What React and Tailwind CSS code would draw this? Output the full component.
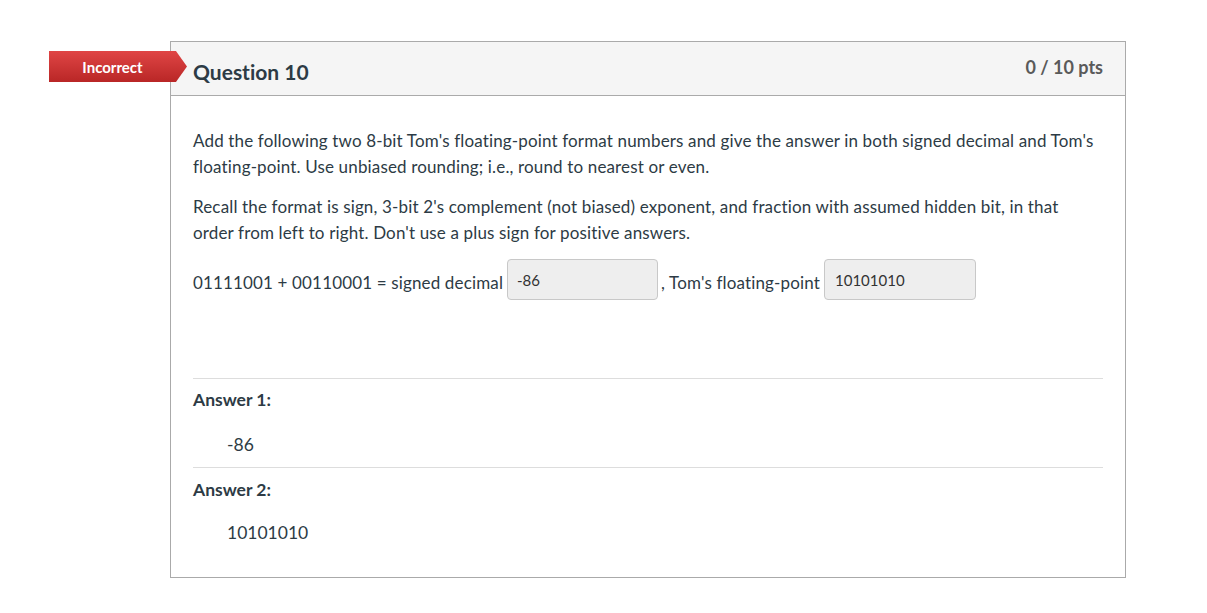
export default function App() {
  const font = { fontFamily: "Lato, 'Open Sans', sans-serif" };
  return (
    <div className="min-h-[613px] w-[1207px] bg-white text-[#2d3b45] [font-variant-ligatures:none]" style={font}>
      <div className="pt-[41px] pl-[170px]">
        <div className="relative w-[956px] border border-[#aaaaaa] bg-white">
          <div className="absolute left-[-122px] top-[9px] flex h-[31px] w-[138px] items-center bg-gradient-to-b from-[#e04545] to-[#b92626] pr-[11px] [clip-path:polygon(0_0,92%_0,100%_50%,92%_100%,0_100%)]">
            <span className="w-full text-center text-[15px] font-bold leading-[20px] text-white">Incorrect</span>
          </div>
          <div className="flex h-[54px] items-start justify-between border-b border-[#aaaaaa] bg-[#f5f5f5] px-[22px]">
            <div className="pt-[16px] text-[21px] font-bold leading-[28px] text-[#2d3b45]">Question 10</div>
            <div className="pt-[13px] text-[18px] font-bold leading-[24px] text-[#5a5a5a]">0 / 10 pts</div>
          </div>
          <div className="px-[22px] pt-[32px] pb-[32px]">
            <div className="tracking-[0.15px]">
              <p className="text-[17px] leading-[26px]">
                Add the following two 8-bit Tom's floating-point format numbers and give the answer in both signed decimal and Tom's floating-point. Use unbiased rounding; i.e., round to nearest or even.
              </p>
              <p className="mt-[14px] text-[17px] leading-[26px]">
                Recall the format is sign, 3-bit 2's complement (not biased) exponent, and fraction with assumed hidden bit, in that order from left to right. Don't use a plus sign for positive answers.
              </p>
              <div className="mt-[13px] flex items-start text-[17px] leading-[26px]">
                <span className="mt-[11px]">01111001 + 00110001 = signed decimal</span>
                <div className="ml-[4px] h-[41px] w-[151px] rounded-[4px] border border-[#c8c8c8] bg-[#eeeeee] px-[9px] pt-[10px] text-[15px] leading-[20px] tracking-normal text-[#333]">-86</div>
                <span className="ml-[3px] mt-[11px]">, Tom's floating-point</span>
                <div className="ml-[4px] h-[41px] w-[152px] rounded-[4px] border border-[#c8c8c8] bg-[#eeeeee] px-[10px] pt-[10px] text-[15px] leading-[20px] tracking-normal text-[#333]">10101010</div>
              </div>
            </div>
            <div className="mt-[78px] border-t border-[#dddddd]">
              <div className="mt-[9px] text-[17.5px] font-bold leading-[24px]">Answer 1:</div>
              <div className="mt-[21px] pl-[34px] text-[17.5px] leading-[24px]">-86</div>
            </div>
            <div className="mt-[10px] border-t border-[#dddddd]">
              <div className="mt-[10px] text-[17.5px] font-bold leading-[24px]">Answer 2:</div>
              <div className="mt-[19px] pl-[34px] text-[17.5px] leading-[24px]">10101010</div>
            </div>
          </div>
        </div>
      </div>
    </div>
  );
}
